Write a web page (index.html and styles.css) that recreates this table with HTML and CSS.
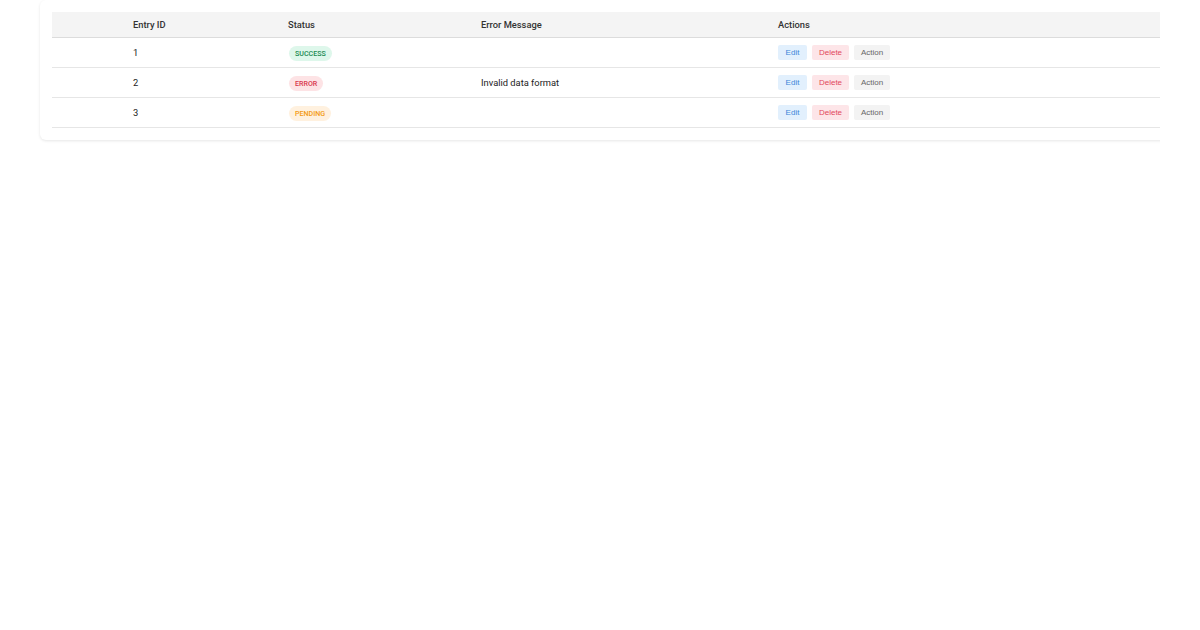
FILE: index.html
```html
<!DOCTYPE html>
<html>
<head>
<meta charset="utf-8">
<link rel="stylesheet" href="styles.css">
</head>
<body>
<div class="viewport">
  <div class="card">
    <table class="log-table">
      <colgroup>
        <col class="c-sel">
        <col class="c-id">
        <col class="c-status">
        <col class="c-msg">
        <col class="c-actions">
      </colgroup>
      <thead>
        <tr>
          <th></th>
          <th>Entry ID</th>
          <th>Status</th>
          <th>Error Message</th>
          <th>Actions</th>
        </tr>
      </thead>
      <tbody>
        <tr>
          <td></td>
          <td>1</td>
          <td><span class="badge badge-success">SUCCESS</span></td>
          <td></td>
          <td class="actions"><button class="btn btn-edit">Edit</button><button class="btn btn-delete">Delete</button><button class="btn btn-action">Action</button></td>
        </tr>
        <tr>
          <td></td>
          <td>2</td>
          <td><span class="badge badge-error">ERROR</span></td>
          <td>Invalid data format</td>
          <td class="actions"><button class="btn btn-edit">Edit</button><button class="btn btn-delete">Delete</button><button class="btn btn-action">Action</button></td>
        </tr>
        <tr>
          <td></td>
          <td>3</td>
          <td><span class="badge badge-pending">PENDING</span></td>
          <td></td>
          <td class="actions"><button class="btn btn-edit">Edit</button><button class="btn btn-delete">Delete</button><button class="btn btn-action">Action</button></td>
        </tr>
      </tbody>
    </table>
  </div>
</div>
</body>
</html>
```

FILE: styles.css
```css
html, body {
  margin: 0;
  padding: 0;
  background: #ffffff;
}

body {
  font-family: Roboto, "Liberation Sans", Arial, sans-serif;
  color: #222;
}

.viewport {
  width: 1160px;
  overflow: hidden;
  padding-bottom: 6px;
}

.card {
  margin-left: 40px;
  width: 1140px;
  box-sizing: border-box;
  padding: 12px 0 12px 12px;
  background: #fff;
  border-radius: 6px;
  box-shadow: 0 1px 3px rgba(0, 0, 0, 0.1);
}

.log-table {
  width: 100%;
  border-collapse: collapse;
  font-size: 9.33px;
}

.c-sel { width: 73px; }
.c-id { width: 155px; }
.c-status { width: 193px; }
.c-msg { width: 297px; }

.log-table th {
  background: #f4f4f4;
  text-align: left;
  font-weight: 500;
  color: #333;
  height: 25px;
  padding: 0 8px;
  border-bottom: 1px solid #dcdcdc;
}

.log-table td {
  height: 29px;
  padding: 0 8px;
  border-bottom: 1px solid #e6e6e6;
  color: #222;
  vertical-align: middle;
}

.badge {
  display: inline-block;
  height: 15px;
  line-height: 15px;
  padding: 0 6px;
  border-radius: 8px;
  font-size: 7.1px;
  font-weight: 500;
  margin-top: 2px;
  margin-left: 1px;
}

.badge-success { background: #def7eb; color: #1b8a52; }
.badge-error { background: #fde3e5; color: #d8354b; }
.badge-pending { background: #fff1df; color: #f39a12; }

.actions {
  white-space: nowrap;
}

.btn {
  font-family: "Liberation Sans", Arial, sans-serif;
  font-size: 8px;
  height: 15px;
  line-height: 15px;
  padding: 0;
  border: none;
  border-radius: 2px;
  margin-right: 5px;
  vertical-align: middle;
}

.btn-edit { background: #e2f0fd; color: #3b87d9; width: 29px; }
.btn-delete { background: #fde5e8; color: #e2485b; width: 37px; }
.btn-action { background: #f3f3f3; color: #666; width: 36px; }
```
